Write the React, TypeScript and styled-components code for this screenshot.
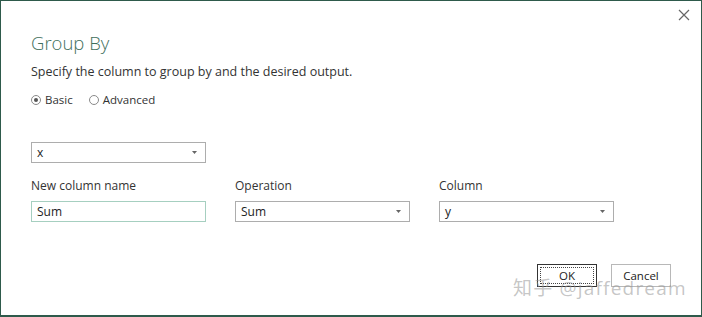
import styled, { createGlobalStyle } from "styled-components";

const GlobalStyle = createGlobalStyle`
  html, body {
    margin: 0;
    padding: 0;
    background: #ffffff;
  }
  * {
    box-sizing: border-box;
  }
`;

const FONT = `"Open Sans", "Noto Sans", "Noto Sans CJK SC", sans-serif`;

const Dialog = styled.div`
  position: relative;
  width: 702px;
  height: 317px;
  border: 1px solid #2e5a4b;
  border-bottom-width: 2px;
  background: #ffffff;
  font-family: ${FONT};
  color: #333333;
  padding: 30px 30px 0 30px;
  display: flex;
  flex-direction: column;
`;

const CloseButton = styled.button`
  position: absolute;
  top: 7px;
  right: 10px;
  width: 14px;
  height: 14px;
  padding: 0;
  border: none;
  background: none;
  display: flex;
  align-items: center;
  justify-content: center;
`;

const Title = styled.h1`
  margin: 0;
  font-size: 18.5px;
  font-weight: 300;
  color: #3f6f5c;
  line-height: 24px;
`;

const Subtitle = styled.p`
  margin: 8px 0 0;
  font-size: 12.5px;
  line-height: 18px;
  color: #333333;
`;

const RadioRow = styled.div`
  display: flex;
  gap: 16px;
  margin-top: 11px;
  font-size: 11.5px;
  line-height: 16px;
`;

const RadioLabel = styled.label`
  display: flex;
  align-items: center;
  gap: 4px;
`;

const RadioDot = styled.span<{ checked?: boolean }>`
  width: 10px;
  height: 10px;
  border-radius: 50%;
  border: 1px solid #8a8a8a;
  display: flex;
  align-items: center;
  justify-content: center;
  &::after {
    content: "";
    width: 4px;
    height: 4px;
    border-radius: 50%;
    background: ${({ checked }) => (checked ? "#555555" : "transparent")};
  }
`;

const Field = styled.div<{ width?: number; highlight?: boolean }>`
  width: ${({ width }) => width ?? 175}px;
  height: 21px;
  border: 1px solid ${({ highlight }) => (highlight ? "#a6cfc0" : "#adadad")};
  display: flex;
  align-items: center;
  justify-content: space-between;
  padding: 0 5px 0 5px;
  font-size: 12px;
  color: #222222;
`;

const CaretBox = styled.span`
  display: flex;
  padding-right: 3px;
`;

const KeyRow = styled.div`
  margin-top: 34px;
`;

const ColumnsRow = styled.div`
  display: flex;
  gap: 29px;
  margin-top: 15px;
`;

const ColumnGroup = styled.div`
  display: flex;
  flex-direction: column;
  gap: 7px;
`;

const FieldLabel = styled.span`
  font-size: 12px;
  line-height: 16px;
  color: #333333;
`;

const Footer = styled.div`
  display: flex;
  justify-content: flex-end;
  gap: 14px;
  margin-top: 42px;
  padding-right: 0;
`;

const Button = styled.button<{ primary?: boolean }>`
  width: 60px;
  height: 23px;
  font-family: ${FONT};
  font-size: 11.5px;
  color: #222222;
  background: #ffffff;
  border: 1px solid ${({ primary }) => (primary ? "#333333" : "#b8b8b8")};
  outline: ${({ primary }) => (primary ? "1px dotted #444444" : "none")};
  outline-offset: -4px;
  padding: 0;
`;

const Watermark = styled.span`
  position: absolute;
  left: 512px;
  top: 272px;
  font-size: 19px;
  letter-spacing: 1.2px;
  color: rgba(150, 150, 150, 0.55);
  pointer-events: none;
  white-space: nowrap;
`;

function Caret() {
  return (
    <CaretBox>
      <svg width="5" height="3" viewBox="0 0 5 3">
        <path d="M0 0h5L2.5 3z" fill="#666666" />
      </svg>
    </CaretBox>
  );
}

function Select({ value, width }: { value: string; width?: number }) {
  return (
    <Field width={width}>
      <span>{value}</span>
      <Caret />
    </Field>
  );
}

export default function App() {
  return (
    <>
      <GlobalStyle />
      <Dialog>
        <CloseButton aria-label="close">
          <svg width="12" height="12" viewBox="0 0 12 12">
            <path d="M1 1l10 10M11 1L1 11" stroke="#666666" strokeWidth="1.2" />
          </svg>
        </CloseButton>
        <Title>Group By</Title>
        <Subtitle>Specify the column to group by and the desired output.</Subtitle>
        <RadioRow>
          <RadioLabel>
            <RadioDot checked />
            Basic
          </RadioLabel>
          <RadioLabel>
            <RadioDot />
            Advanced
          </RadioLabel>
        </RadioRow>
        <KeyRow>
          <Select value="x" />
        </KeyRow>
        <ColumnsRow>
          <ColumnGroup>
            <FieldLabel>New column name</FieldLabel>
            <Field highlight>Sum</Field>
          </ColumnGroup>
          <ColumnGroup>
            <FieldLabel>Operation</FieldLabel>
            <Select value="Sum" />
          </ColumnGroup>
          <ColumnGroup>
            <FieldLabel>Column</FieldLabel>
            <Select value="y" />
          </ColumnGroup>
        </ColumnsRow>
        <Footer>
          <Button primary>OK</Button>
          <Button>Cancel</Button>
        </Footer>
        <Watermark>知乎 @jaffedream</Watermark>
      </Dialog>
    </>
  );
}
